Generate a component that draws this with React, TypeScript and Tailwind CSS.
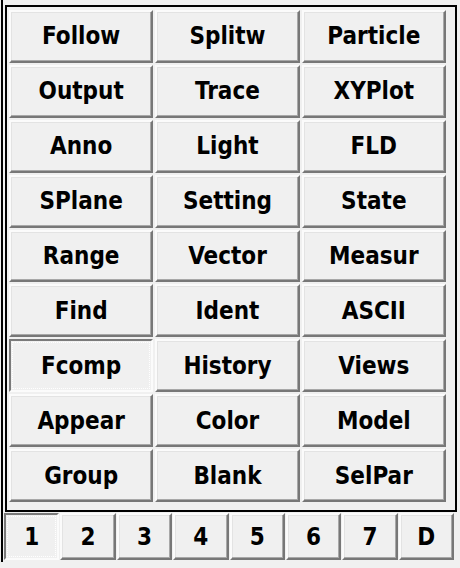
import React from 'react';

const rows = [
  ['Follow', 'Splitw', 'Particle'],
  ['Output', 'Trace', 'XYPlot'],
  ['Anno', 'Light', 'FLD'],
  ['SPlane', 'Setting', 'State'],
  ['Range', 'Vector', 'Measur'],
  ['Find', 'Ident', 'ASCII'],
  ['Fcomp', 'History', 'Views'],
  ['Appear', 'Color', 'Model'],
  ['Group', 'Blank', 'SelPar'],
];

const tabs = ['1', '2', '3', '4', '5', '6', '7', 'D'];

const raised =
  'border-2 border-t-[#fbfbfb] border-l-[#fbfbfb] border-r-[#777777] border-b-[#777777] shadow-[inset_-1px_-1px_0_#a8a8a8,inset_1px_1px_0_#e3e3e3]';
const sunken =
  'border-2 border-t-[#7a7a7a] border-l-[#7a7a7a] border-r-[#fbfbfb] border-b-[#fbfbfb] outline-1 outline-dotted outline-white -outline-offset-4';

function Btn({ label, pressed }: { label: string; pressed?: boolean }) {
  return (
    <button
      className={`flex items-center justify-center bg-[#f0f0f0] text-black font-bold text-[24px] leading-none ${
        pressed ? sunken : raised
      }`}
    >
      {label}
    </button>
  );
}

export default function App() {
  return (
    <div className="w-[460px] h-[568px] bg-[#f0f0f0] overflow-hidden font-['DejaVu_Sans_Condensed','DejaVu_Sans',sans-serif] [font-stretch:condensed]">
      <div className="ml-[1px] h-[562px] border-l-2 border-black pl-[1px] pt-[5px]">
        {/* button panel */}
        <div className="ml-[1px] w-[452px] h-[507px] border-2 border-black pl-[2px] pt-[3px]">
          <div className="grid grid-cols-3 grid-rows-9 gap-[2px] w-[437px] h-[492px]">
            {rows.flat().map((name) => (
              <Btn key={name} label={name} pressed={name === 'Fcomp'} />
            ))}
          </div>
        </div>

        {/* page tabs */}
        <div className="mt-[1px] grid grid-cols-8 gap-[1px] w-[450px] h-[47px]">
          {tabs.map((t, i) => (
            <Btn key={t} label={t} pressed={i === 0} />
          ))}
        </div>
      </div>
    </div>
  );
}
